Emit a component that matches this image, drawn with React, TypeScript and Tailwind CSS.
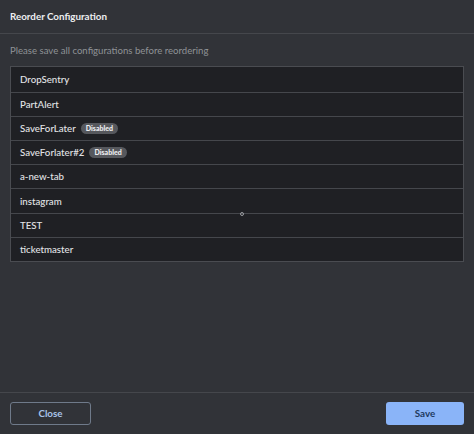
const items: { name: string; disabled?: boolean }[] = [
  { name: "DropSentry" },
  { name: "PartAlert" },
  { name: "SaveForLater", disabled: true },
  { name: "SaveForlater#2", disabled: true },
  { name: "a-new-tab" },
  { name: "instagram" },
  { name: "TEST" },
  { name: "ticketmaster" },
];

export default function App() {
  return (
    <div
      className="relative w-[474px] h-[434px] bg-[#313338] text-[#dcdde0] flex flex-col overflow-hidden"
      style={{ fontFamily: 'Lato, "Noto Sans", sans-serif' }}
    >
      <header className="h-[34px] flex items-center px-[10px] border-b border-[#45474c]">
        <h1 className="text-[9.8px] font-bold text-[#eceef0]">Reorder Configuration</h1>
      </header>

      <main className="flex-1 px-[10px]">
        <p className="mt-[10px] text-[9.6px] text-[#8f9296]">
          Please save all configurations before reordering
        </p>
        <ul className="mt-[8px] border border-[#4a4c51] bg-[#1f2024]">
          {items.map((item, i) => (
            <li
              key={item.name}
              className={`h-[24.2px] flex items-center gap-[5px] px-[9px] text-[9.7px] font-medium text-[#e3e4e7] ${
                i > 0 ? "border-t border-[#45474c]" : ""
              }`}
            >
              <span>{item.name}</span>
              {item.disabled && (
                <span className="rounded-full bg-[#56585d] px-[5px] h-[11px] flex items-center text-[7px] font-black text-[#eeeff1]">
                  Disabled
                </span>
              )}
            </li>
          ))}
        </ul>
      </main>

      <footer className="h-[42px] border-t border-[#45474c] flex items-center justify-between px-[10px]">
        <button className="w-[81px] h-[23px] rounded-[3px] border border-[#6f7a8a] text-[9.8px] font-bold text-[#a9c3e8]">
          Close
        </button>
        <button className="w-[78px] h-[23px] rounded-[3px] bg-[#8ab4f8] text-[9.8px] font-bold text-[#1e3a5f]">
          Save
        </button>
      </footer>

      <span className="absolute left-[240px] top-[212px] w-[4px] h-[4px] rounded-full border border-[#9a9ca0]" />
    </div>
  );
}
